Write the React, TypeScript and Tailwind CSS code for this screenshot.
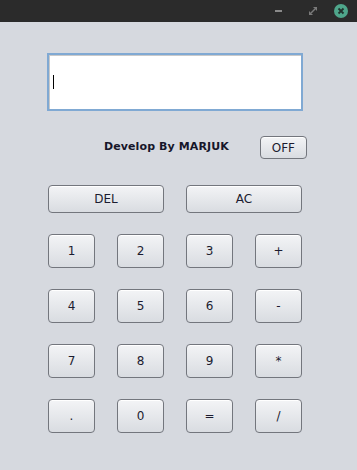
import React from 'react';

const font = { fontFamily: '"DejaVu Sans", Verdana, sans-serif' };

function Btn({ label, className }: { label: string; className: string }) {
  return (
    <button
      className={`flex items-center justify-center rounded-[4px] border border-[#73767d] bg-gradient-to-b from-[#f3f4f6] to-[#d9dce1] text-[12px] text-[#1c1c30] shadow-[inset_0_1px_0_#ffffff] ${className}`}
    >
      {label}
    </button>
  );
}

const rows = [
  ['1', '2', '3', '+'],
  ['4', '5', '6', '-'],
  ['7', '8', '9', '*'],
  ['.', '0', '=', '/'],
];

export default function App() {
  return (
    <div className="w-[357px] h-[470px] bg-[#d6d9df] flex flex-col" style={font}>
      {/* title bar */}
      <div className="h-[22px] bg-[#2b2b2b] flex items-center justify-end pr-[9px] gap-[16px]">
        <div className="w-[7px] h-[2px] bg-[#8a8a8a]" />
        <svg width="10" height="10" viewBox="0 0 10 10" className="ml-[10px]">
          <path d="M5 1 L9 1 L9 5 Z M1 5 L1 9 L5 9 Z" fill="#7a7a7a" />
          <path d="M3 7 L7 3" stroke="#7a7a7a" strokeWidth="1.5" />
        </svg>
        <svg width="14" height="14" viewBox="0 0 14 14">
          <circle cx="7" cy="7" r="7" fill="#4fa68b" />
          <path d="M4.5 4.5 L9.5 9.5 M9.5 4.5 L4.5 9.5" stroke="#22332e" strokeWidth="1.8" />
        </svg>
      </div>

      <div className="flex flex-col pl-[47px]">
        {/* display */}
        <div className="mt-[31px] w-[256px] h-[58px] border-2 border-[#80a9d3] bg-white flex items-center pl-[4px] shadow-[inset_1px_1px_0_#c9c9c9]">
          <div className="w-[1px] h-[14px] bg-black" />
        </div>

        <div className="mt-[25px] flex items-center h-[23px]">
          <span className="ml-[57px] text-[11px] font-bold text-[#16162a] tracking-[0.1px]">Develop By MARJUK</span>
          <Btn label="OFF" className="ml-[31px] w-[47px] h-[23px]" />
        </div>

        <div className="mt-[26px] flex gap-[22px] pl-[1px]">
          <Btn label="DEL" className="w-[116px] h-[28px]" />
          <Btn label="AC" className="w-[116px] h-[28px]" />
        </div>

        <div className="mt-[21px] flex flex-col gap-[21px] pl-[1px]">
          {rows.map((r, i) => (
            <div key={i} className="flex gap-[22px]">
              {r.map((k) => (
                <Btn key={k} label={k} className="w-[47px] h-[34px]" />
              ))}
            </div>
          ))}
        </div>
      </div>
    </div>
  );
}
